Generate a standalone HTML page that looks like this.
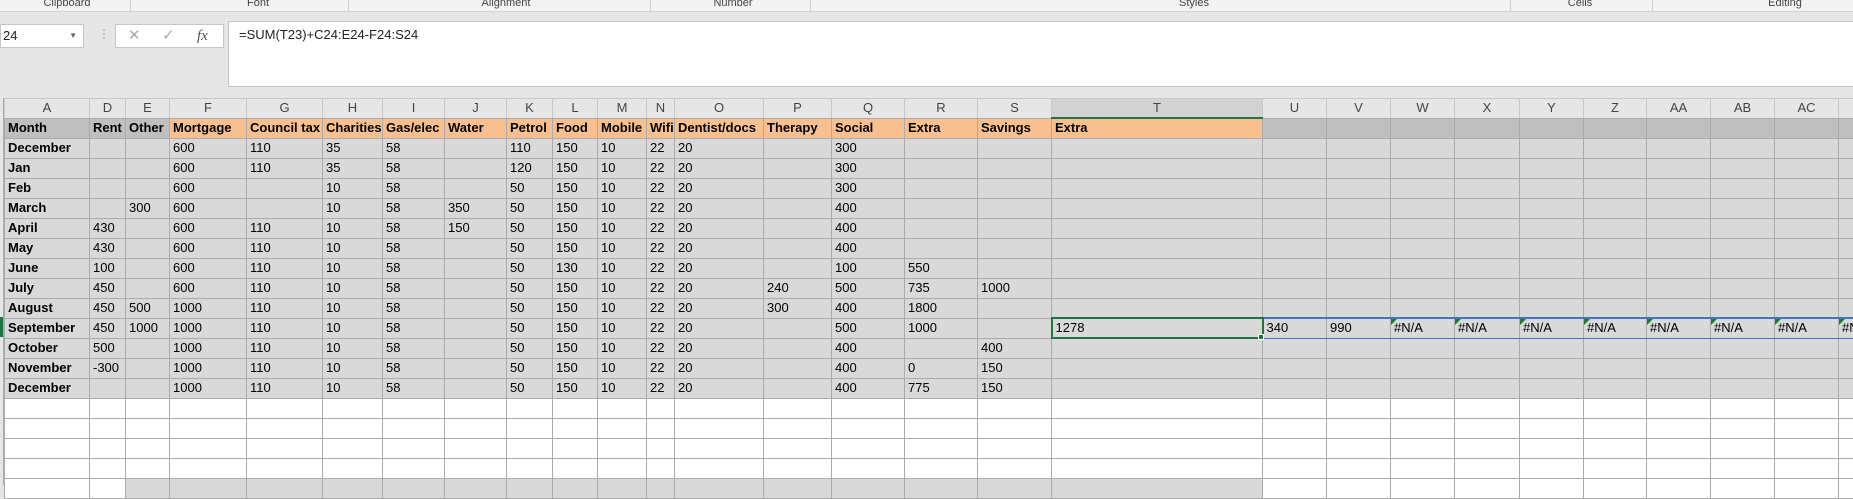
<!DOCTYPE html>
<html><head><meta charset="utf-8">
<style>
*{margin:0;padding:0;box-sizing:border-box}
body{width:1853px;height:485px;overflow:hidden;background:#e6e6e6;font-family:"Liberation Sans",Arial,sans-serif;position:relative}
#rib{position:absolute;left:0;top:0;width:1853px;height:12px;background:#f3f3f3;border-bottom:1px solid #d4d4d4;font-size:11px;color:#444}
#rib span{position:absolute;top:-3px;transform:translateX(-50%)}
#rib i{position:absolute;top:0;width:1px;height:11px;background:#d0d0d0}
.box{position:absolute;background:#fff;border:1px solid #c6c6c6}
table{position:absolute;left:4px;top:98px;width:1899px;border-collapse:collapse;table-layout:fixed;font-size:13px;color:#000}
td{height:20px;border:1px solid #ababab;padding:0 0 0 3px;white-space:nowrap;overflow:hidden;background:#d9d9d9;line-height:18px}
tr.ch td{height:19px;background:#e6e6e6;color:#444;text-align:center;padding:0;border-color:#c8c8c8;border-bottom:1px solid #ababab}
tr.ch td.sel{background:#d2d2d2;border-bottom:2px solid #217346}
tr.hd td{font-weight:bold;background:#f8c08f}
tr.hd td.g{background:#bfbfbf}
td.b{font-weight:bold}
tr.w td{background:#fff}
tr.w td.gg{background:#d9d9d9}
td.cur{border:2px solid #217346}
tr.sep td.bl{border-top:2px solid #4472c4;border-bottom:1px solid #4472c4}
td.na{position:relative}
td.na:before{content:"";position:absolute;left:0;top:0;border-top:6px solid #1e7c31;border-right:6px solid transparent}
</style></head><body>
<div id="rib">
<span style="left:67px">Clipboard</span><span style="left:258px">Font</span><span style="left:506px">Alignment</span><span style="left:733px">Number</span><span style="left:1194px">Styles</span><span style="left:1580px">Cells</span><span style="left:1785px">Editing</span>
<i style="left:130px"></i><i style="left:348px"></i><i style="left:650px"></i><i style="left:810px"></i><i style="left:1510px"></i><i style="left:1652px"></i>
</div>
<div class="box" style="left:0;top:24px;width:84px;height:24px;font-size:13px;line-height:22px;padding-left:2px;color:#222">24<span style="position:absolute;right:6px;top:0;font-size:8px;color:#666">▼</span></div>
<div style="position:absolute;left:98px;top:27px;color:#999;font-size:12px">⋮</div>
<div class="box" style="left:115px;top:24px;width:109px;height:24px;color:#aaa;font-size:15px;line-height:22px"><span style="position:absolute;left:12px">✕</span><span style="position:absolute;left:46px">✓</span><span style="position:absolute;left:81px;color:#555;font-style:italic;font-family:'Liberation Serif',serif">fx</span></div>
<div class="box" style="left:228px;top:21px;width:1630px;height:66px;font-size:13px;padding:5px 0 0 10px;color:#222">=SUM(T23)+C24:E24-F24:S24</div>
<div style="position:absolute;left:0;top:98px;width:4px;height:387px;background:#e6e6e6;border-right:1px solid #ababab"></div>
<table>
<colgroup><col style="width:85px"><col style="width:36px"><col style="width:44px"><col style="width:77px"><col style="width:76px"><col style="width:60px"><col style="width:62px"><col style="width:62px"><col style="width:46px"><col style="width:45px"><col style="width:49px"><col style="width:28px"><col style="width:89px"><col style="width:68px"><col style="width:73px"><col style="width:73px"><col style="width:74px"><col style="width:211px"><col style="width:64px"><col style="width:64px"><col style="width:64px"><col style="width:65px"><col style="width:64px"><col style="width:63px"><col style="width:64px"><col style="width:64px"><col style="width:64px"><col style="width:64px"></colgroup>
<tr class="ch"><td>A</td><td>D</td><td>E</td><td>F</td><td>G</td><td>H</td><td>I</td><td>J</td><td>K</td><td>L</td><td>M</td><td>N</td><td>O</td><td>P</td><td>Q</td><td>R</td><td>S</td><td class="sel">T</td><td>U</td><td>V</td><td>W</td><td>X</td><td>Y</td><td>Z</td><td>AA</td><td>AB</td><td>AC</td><td>AD</td></tr>
<tr class="hd"><td class="g">Month</td><td class="g">Rent</td><td class="g">Other</td><td>Mortgage</td><td>Council tax</td><td>Charities</td><td>Gas/elec</td><td>Water</td><td>Petrol</td><td>Food</td><td>Mobile</td><td>Wifi</td><td>Dentist/docs</td><td>Therapy</td><td>Social</td><td>Extra</td><td>Savings</td><td>Extra</td><td class="g"></td><td class="g"></td><td class="g"></td><td class="g"></td><td class="g"></td><td class="g"></td><td class="g"></td><td class="g"></td><td class="g"></td><td class="g"></td></tr>
<tr><td class="b">December</td><td></td><td></td><td>600</td><td>110</td><td>35</td><td>58</td><td></td><td>110</td><td>150</td><td>10</td><td>22</td><td>20</td><td></td><td>300</td><td></td><td></td><td></td><td></td><td></td><td></td><td></td><td></td><td></td><td></td><td></td><td></td><td></td></tr>
<tr><td class="b">Jan</td><td></td><td></td><td>600</td><td>110</td><td>35</td><td>58</td><td></td><td>120</td><td>150</td><td>10</td><td>22</td><td>20</td><td></td><td>300</td><td></td><td></td><td></td><td></td><td></td><td></td><td></td><td></td><td></td><td></td><td></td><td></td><td></td></tr>
<tr><td class="b">Feb</td><td></td><td></td><td>600</td><td></td><td>10</td><td>58</td><td></td><td>50</td><td>150</td><td>10</td><td>22</td><td>20</td><td></td><td>300</td><td></td><td></td><td></td><td></td><td></td><td></td><td></td><td></td><td></td><td></td><td></td><td></td><td></td></tr>
<tr><td class="b">March</td><td></td><td>300</td><td>600</td><td></td><td>10</td><td>58</td><td>350</td><td>50</td><td>150</td><td>10</td><td>22</td><td>20</td><td></td><td>400</td><td></td><td></td><td></td><td></td><td></td><td></td><td></td><td></td><td></td><td></td><td></td><td></td><td></td></tr>
<tr><td class="b">April</td><td>430</td><td></td><td>600</td><td>110</td><td>10</td><td>58</td><td>150</td><td>50</td><td>150</td><td>10</td><td>22</td><td>20</td><td></td><td>400</td><td></td><td></td><td></td><td></td><td></td><td></td><td></td><td></td><td></td><td></td><td></td><td></td><td></td></tr>
<tr><td class="b">May</td><td>430</td><td></td><td>600</td><td>110</td><td>10</td><td>58</td><td></td><td>50</td><td>150</td><td>10</td><td>22</td><td>20</td><td></td><td>400</td><td></td><td></td><td></td><td></td><td></td><td></td><td></td><td></td><td></td><td></td><td></td><td></td><td></td></tr>
<tr><td class="b">June</td><td>100</td><td></td><td>600</td><td>110</td><td>10</td><td>58</td><td></td><td>50</td><td>130</td><td>10</td><td>22</td><td>20</td><td></td><td>100</td><td>550</td><td></td><td></td><td></td><td></td><td></td><td></td><td></td><td></td><td></td><td></td><td></td><td></td></tr>
<tr><td class="b">July</td><td>450</td><td></td><td>600</td><td>110</td><td>10</td><td>58</td><td></td><td>50</td><td>150</td><td>10</td><td>22</td><td>20</td><td>240</td><td>500</td><td>735</td><td>1000</td><td></td><td></td><td></td><td></td><td></td><td></td><td></td><td></td><td></td><td></td><td></td></tr>
<tr><td class="b">August</td><td>450</td><td>500</td><td>1000</td><td>110</td><td>10</td><td>58</td><td></td><td>50</td><td>150</td><td>10</td><td>22</td><td>20</td><td>300</td><td>400</td><td>1800</td><td></td><td></td><td></td><td></td><td></td><td></td><td></td><td></td><td></td><td></td><td></td><td></td></tr>
<tr class="sep"><td class="b">September</td><td>450</td><td>1000</td><td>1000</td><td>110</td><td>10</td><td>58</td><td></td><td>50</td><td>150</td><td>10</td><td>22</td><td>20</td><td></td><td>500</td><td>1000</td><td></td><td class="cur">1278</td><td class="bl">340</td><td class="bl">990</td><td class="bl na">#N/A</td><td class="bl na">#N/A</td><td class="bl na">#N/A</td><td class="bl na">#N/A</td><td class="bl na">#N/A</td><td class="bl na">#N/A</td><td class="bl na">#N/A</td><td class="bl na">#N/A</td></tr>
<tr><td class="b">October</td><td>500</td><td></td><td>1000</td><td>110</td><td>10</td><td>58</td><td></td><td>50</td><td>150</td><td>10</td><td>22</td><td>20</td><td></td><td>400</td><td></td><td>400</td><td></td><td></td><td></td><td></td><td></td><td></td><td></td><td></td><td></td><td></td><td></td></tr>
<tr><td class="b">November</td><td>-300</td><td></td><td>1000</td><td>110</td><td>10</td><td>58</td><td></td><td>50</td><td>150</td><td>10</td><td>22</td><td>20</td><td></td><td>400</td><td>0</td><td>150</td><td></td><td></td><td></td><td></td><td></td><td></td><td></td><td></td><td></td><td></td><td></td></tr>
<tr><td class="b">December</td><td></td><td></td><td>1000</td><td>110</td><td>10</td><td>58</td><td></td><td>50</td><td>150</td><td>10</td><td>22</td><td>20</td><td></td><td>400</td><td>775</td><td>150</td><td></td><td></td><td></td><td></td><td></td><td></td><td></td><td></td><td></td><td></td><td></td></tr>
<tr class="w"><td></td><td></td><td></td><td></td><td></td><td></td><td></td><td></td><td></td><td></td><td></td><td></td><td></td><td></td><td></td><td></td><td></td><td></td><td></td><td></td><td></td><td></td><td></td><td></td><td></td><td></td><td></td><td></td></tr>
<tr class="w"><td></td><td></td><td></td><td></td><td></td><td></td><td></td><td></td><td></td><td></td><td></td><td></td><td></td><td></td><td></td><td></td><td></td><td></td><td></td><td></td><td></td><td></td><td></td><td></td><td></td><td></td><td></td><td></td></tr>
<tr class="w"><td></td><td></td><td></td><td></td><td></td><td></td><td></td><td></td><td></td><td></td><td></td><td></td><td></td><td></td><td></td><td></td><td></td><td></td><td></td><td></td><td></td><td></td><td></td><td></td><td></td><td></td><td></td><td></td></tr>
<tr class="w"><td></td><td></td><td></td><td></td><td></td><td></td><td></td><td></td><td></td><td></td><td></td><td></td><td></td><td></td><td></td><td></td><td></td><td></td><td></td><td></td><td></td><td></td><td></td><td></td><td></td><td></td><td></td><td></td></tr>
<tr class="w"><td></td><td></td><td class="gg"></td><td class="gg"></td><td class="gg"></td><td class="gg"></td><td class="gg"></td><td class="gg"></td><td class="gg"></td><td class="gg"></td><td class="gg"></td><td class="gg"></td><td class="gg"></td><td class="gg"></td><td class="gg"></td><td class="gg"></td><td class="gg"></td><td class="gg"></td><td></td><td></td><td></td><td></td><td></td><td></td><td></td><td></td><td></td><td></td></tr>
</table>
<div style="position:absolute;left:0;top:317px;width:3px;height:20px;background:#217346"></div>
<div style="position:absolute;left:1258px;top:334px;width:6px;height:6px;background:#217346;border:1px solid #fff"></div>
</body></html>
